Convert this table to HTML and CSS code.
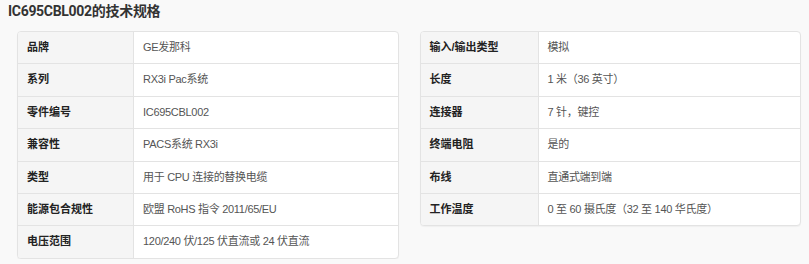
FILE: index.html
```html
<!DOCTYPE html>
<html lang="zh">
<head>
<meta charset="utf-8">
<title>IC695CBL002的技术规格</title>
<link rel="stylesheet" href="styles.css">
</head>
<body>
<h2 class="title">IC695CBL002的技术规格</h2>
<div class="specs">
  <table class="spec-table spec-left">
    <tr><th>品牌</th><td>GE发那科</td></tr>
    <tr><th>系列</th><td>RX3i Pac系统</td></tr>
    <tr><th>零件编号</th><td>IC695CBL002</td></tr>
    <tr><th>兼容性</th><td>PACS系统 RX3i</td></tr>
    <tr><th>类型</th><td>用于 CPU 连接的替换电缆</td></tr>
    <tr><th>能源包合规性</th><td>欧盟 RoHS 指令 2011/65/EU</td></tr>
    <tr><th>电压范围</th><td>120/240 伏/125 伏直流或 24 伏直流</td></tr>
  </table>
  <table class="spec-table spec-right">
    <tr><th>输入/输出类型</th><td>模拟</td></tr>
    <tr><th>长度</th><td>1 米（36 英寸）</td></tr>
    <tr><th>连接器</th><td>7 针，键控</td></tr>
    <tr><th>终端电阻</th><td>是的</td></tr>
    <tr><th>布线</th><td>直通式端到端</td></tr>
    <tr><th>工作温度</th><td>0 至 60 摄氏度（32 至 140 华氏度）</td></tr>
  </table>
</div>
</body>
</html>
```
FILE: styles.css
```css
html, body {
  margin: 0;
  padding: 0;
  background: #f9f9f9;
  font-family: "Liberation Sans", "Noto Sans CJK SC", sans-serif;
}
.title {
  margin: 0;
  padding: 0 0 0 8px;
  font-family: Roboto, "Noto Sans CJK SC", sans-serif;
  font-size: 14px;
  line-height: 22px;
  font-weight: bold;
  letter-spacing: -0.3px;
  color: #333;
}
.specs {
  display: grid;
  grid-template-columns: 1fr 1fr;
  column-gap: 21px;
  align-items: start;
  padding: 9px 8px 0 17px;
}
.spec-table {
  width: 100%;
  border-collapse: separate;
  border-spacing: 0;
  border: 1px solid #e3e3e3;
  border-radius: 4px;
  background: #fff;
  box-shadow: 0 1px 1px rgba(0,0,0,0.04);
  overflow: hidden;
  table-layout: fixed;
}
.spec-table th,
.spec-table td {
  padding: 6px 9px;
  height: 19.4px;
  line-height: 19.4px;
  font-size: 11px;
  text-align: left;
  vertical-align: middle;
  border-bottom: 1px solid #e3e3e3;
}
.spec-table tr:last-child th,
.spec-table tr:last-child td {
  border-bottom: none;
}
.spec-table th {
  background: #f5f5f5;
  color: #222;
  font-weight: bold;
  border-right: 1px solid #e3e3e3;
}
.spec-table td {
  color: #555;
  font-weight: normal;
  letter-spacing: -0.3px;
}
.spec-left th { width: 97px; }
.spec-right th { width: 99px; }
```
